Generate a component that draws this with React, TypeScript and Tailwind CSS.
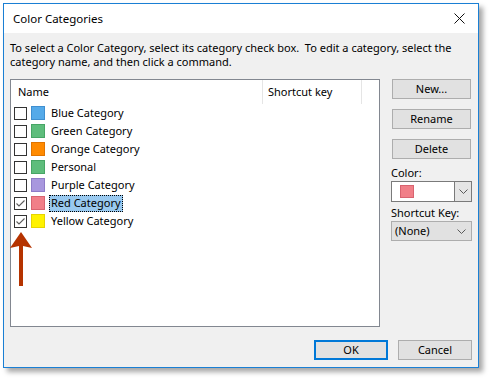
import React from "react";

type Category = {
  name: string;
  color: string;
  edge: string;
  checked: boolean;
  selected?: boolean;
};

const categories: Category[] = [
  { name: "Blue Category", color: "#55aae9", edge: "#3f8fd0", checked: false },
  { name: "Green Category", color: "#5ebd7c", edge: "#47a565", checked: false },
  { name: "Orange Category", color: "#ff8a00", edge: "#e07400", checked: false },
  { name: "Personal", color: "#5ebd7c", edge: "#47a565", checked: false },
  { name: "Purple Category", color: "#a897de", edge: "#8e7cc7", checked: false },
  { name: "Red Category", color: "#f17f88", edge: "#d86470", checked: true, selected: true },
  { name: "Yellow Category", color: "#fff200", edge: "#e6d400", checked: true },
];

function Chevron() {
  return (
    <svg width="9" height="5" viewBox="0 0 9 5" className="block">
      <polyline points="0.5,0.5 4.5,4.5 8.5,0.5" fill="none" stroke="#5a5a5a" strokeWidth="1" />
    </svg>
  );
}

function CheckBox({ checked }: { checked: boolean }) {
  return (
    <div className="w-[13px] h-[13px] border border-[#333333] bg-white flex items-center justify-center">
      {checked && (
        <svg width="9" height="7" viewBox="0 0 9 7" className="block">
          <polyline points="0.5,3.5 3,6 8.5,0.5" fill="none" stroke="#5c5c5c" strokeWidth="1.1" />
        </svg>
      )}
    </div>
  );
}

function Button({ label, primary }: { label: string; primary?: boolean }) {
  return (
    <div
      className={`h-[20px] flex items-center justify-center bg-[#e1e1e1] text-[11px] text-black ${
        primary ? "border-2 border-[#0078d7]" : "border border-[#adadad]"
      }`}
    >
      {label}
    </div>
  );
}

export default function App() {
  return (
    <div
      className="w-[489px] h-[381px] bg-white pl-[3px] pt-[3px] relative"
      style={{ fontFamily: '"Noto Sans", "Segoe UI", sans-serif' }}
    >
      <div className="w-[476px] h-[365px] border border-[#1a7fd4] bg-[#f0f0f0] flex flex-col shadow-[4px_4px_5px_rgba(0,0,0,0.35)]">
        {/* title bar */}
        <div className="h-[29px] bg-white flex items-center justify-between pl-[9px] pr-[10px]">
          <span className="text-[11.5px] text-black">Color Categories</span>
          <svg width="11" height="11" viewBox="0 0 11 11" className="block mr-[3px]">
            <path d="M0.5 0.5 L10.5 10.5 M10.5 0.5 L0.5 10.5" stroke="#111" strokeWidth="1" />
          </svg>
        </div>

        <div className="flex flex-col px-[6px] pt-[8px]">
          <p className="text-[11px] leading-[14px] text-black">
            To select a Color Category, select its category check box.&nbsp; To edit a category, select the
            <br />
            category name, and then click a command.
          </p>

          <div className="flex mt-[10px] gap-[11px]">
            {/* list */}
            <div className="w-[370px] h-[248px] border border-[#828790] bg-white flex flex-col">
              <div className="h-[24px] flex text-[11px] text-black">
                <div className="w-[251px] pl-[7px] flex items-center">Name</div>
                <div className="w-[100px] border-l border-r border-[#e5e5e5] pl-[5px] flex items-center">
                  Shortcut key
                </div>
              </div>
              <div className="flex flex-col">
                {categories.map((c) => (
                  <div key={c.name} className="h-[18px] flex items-center pl-[3px]">
                    <CheckBox checked={c.checked} />
                    <div
                      className="w-[14px] h-[14px] ml-[4px] border"
                      style={{ background: c.color, borderColor: c.edge }}
                    />
                    <span
                      className={`ml-[4px] px-[1px] h-[17px] flex items-center text-[11px] text-black ${
                        c.selected ? "bg-[#99c9ef] border border-dotted border-black" : "border border-transparent"
                      }`}
                    >
                      {c.name}
                    </span>
                  </div>
                ))}
              </div>
            </div>

            {/* right column */}
            <div className="w-[81px] flex flex-col">
              <div className="px-[1px] flex flex-col gap-[10px]">
                <Button label="New..." />
                <Button label="Rename" />
                <Button label="Delete" />
              </div>
              <div className="text-[11px] text-black mt-[6px] h-[16px] leading-[16px]">Color:</div>
              <div className="h-[21px] border border-[#7a7a7a] bg-white flex">
                <div className="flex-1 flex items-center pl-[8px]">
                  <div className="w-[14px] h-[13px] bg-[#f17f88] border border-[#d86470]" />
                </div>
                <div className="w-[17px] bg-[#e5e5e5] border-l border-[#7a7a7a] flex items-center justify-center">
                  <Chevron />
                </div>
              </div>
              <div className="text-[11px] text-black mt-[3px] h-[16px] leading-[16px]">Shortcut Key:</div>
              <div className="h-[20px] border border-[#adadad] bg-[#e1e1e1] flex items-center justify-between pl-[3px] pr-[5px] text-[11px] text-black">
                <span>(None)</span>
                <Chevron />
              </div>
            </div>
          </div>

          <div className="flex justify-end gap-[10px] mt-[13px]">
            <div className="w-[74px]">
              <Button label="OK" primary />
            </div>
            <div className="w-[74px]">
              <Button label="Cancel" />
            </div>
          </div>
        </div>
      </div>

      {/* annotation arrow */}
      <svg width="26" height="60" viewBox="0 0 26 60" className="absolute left-[8px] top-[231px]">
        <path d="M13 1 L24 17 L15 15 L15 55 L11 55 L11 15 L2 17 Z" fill="#b53300" />
      </svg>
    </div>
  );
}
